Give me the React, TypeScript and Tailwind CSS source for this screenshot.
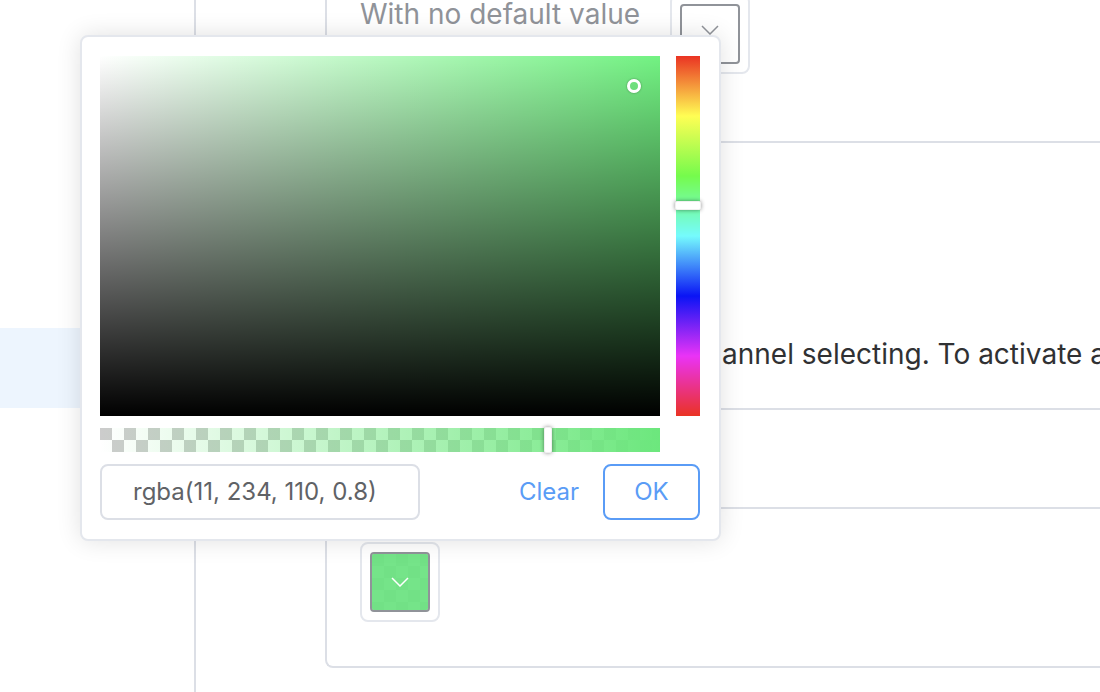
import React from "react";

// colours are written as the screenshot shows them (P3-shifted)
const CHECKER =
  "bg-[repeating-conic-gradient(#fff_0%_25%,#cccccc_0%_50%)] bg-size-[24px_24px]";

function Chevron({ className }: { className: string }) {
  return (
    <svg width="18" height="10" viewBox="0 0 18 10" fill="none" className={className}>
      <path d="M1 1l8 8 8-8" stroke="currentColor" strokeWidth="1.5" />
    </svg>
  );
}

function Trigger({ filled }: { filled?: boolean }) {
  return (
    <div className="h-[80px] w-[80px] shrink-0 rounded-[8px] border-2 border-[#e4e7ed] p-[8px]">
      <div
        className={`h-[60px] w-[60px] overflow-hidden rounded-[4px] border-2 border-[#909399] ${
          filled ? CHECKER : "bg-white"
        }`}
      >
        <div
          className={`flex h-full w-full items-center justify-center ${
            filled ? "bg-[rgba(106,226,128,0.93)]" : ""
          }`}
        >
          <Chevron className={filled ? "text-white" : "-translate-y-[4px] text-[#909399]"} />
        </div>
      </div>
    </div>
  );
}

function ColorDropdown() {
  return (
    <div className="absolute left-[80px] top-[35px] h-[506px] w-[641px] rounded-[8px] border-2 border-[#e4e7ed] bg-white pb-[19px] pl-[18px] pr-[19px] pt-[19px] shadow-[0_0_24px_rgba(0,0,0,0.12)]">
      <div className="flex gap-[16px]">
        {/* saturation / value panel */}
        <div className="h-[360px] w-[560px] bg-[#72f282]">
          <div className="h-full w-full bg-[linear-gradient(to_right,#fff,rgba(255,255,255,0))]">
            <div className="relative h-full w-full bg-[linear-gradient(to_top,#000,rgba(0,0,0,0))]">
              <div className="absolute left-[527px] top-[23px] h-[14px] w-[14px] rounded-full border-[3px] border-white shadow-[0_0_2px_rgba(0,0,0,0.45)]" />
            </div>
          </div>
        </div>
        {/* hue bar */}
        <div className="relative h-[360px] w-[24px] bg-[linear-gradient(to_bottom,#ea3323_0%,#fffe54_16.67%,#75fb4c_33.33%,#75fbfd_50%,#0a14f5_66.67%,#ea33f6_83.33%,#ea3323_100%)]">
          <div className="absolute -left-px top-[145px] h-[9px] w-[26px] rounded-[2px] border border-[#f0f0f0] bg-white shadow-[0_0_4px_rgba(0,0,0,0.45)]" />
        </div>
      </div>

      {/* alpha bar */}
      <div className={`relative mt-[12px] h-[24px] w-[560px] ${CHECKER}`}>
        <div className="h-full w-full bg-[linear-gradient(to_right,rgba(108,231,125,0),#6ce77d)]" />
        <div className="absolute -top-px left-[444px] h-[26px] w-[8px] rounded-[2px] border border-[#f0f0f0] bg-white shadow-[0_0_4px_rgba(0,0,0,0.45)]" />
      </div>

      <div className="mt-[12px] flex h-[56px] items-center justify-between">
        <div className="flex h-[56px] w-[320px] items-center rounded-[8px] border-2 border-[#dcdfe6] pl-[31px] text-[24px] text-[#606266]">
          rgba(11, 234, 110, 0.8)
        </div>
        <div className="flex items-center gap-[24px]">
          <span className="text-[24px] text-[#5a9cf6]">Clear</span>
          <button className="flex h-[56px] w-[97px] items-center justify-center rounded-[8px] border-2 border-[#5a9cf6] text-[24px] text-[#5a9cf6]">
            OK
          </button>
        </div>
      </div>
    </div>
  );
}

export default function App() {
  return (
    <div className="relative h-[692px] w-[1100px] overflow-hidden bg-white font-['Inter',sans-serif]">
      <div className="flex h-full">
        <aside className="h-full w-[196px] shrink-0 border-r-2 border-[#dcdfe6] pt-[328px]">
          <div className="h-[80px] bg-[#edf5fe]" />
        </aside>

        <main className="flex min-w-0 flex-1 flex-col pl-[129px]">
          <section className="-mt-[40px] w-[820px] shrink-0 rounded-bl-[8px] border-2 border-r-0 border-[#dcdfe6] pb-[67px] pl-[33px] pt-[32px]">
            <div className="flex items-start gap-[30px]">
              <span className="text-[28px] leading-[40px] text-[#909399]">With no default value</span>
              <Trigger />
            </div>
          </section>

          <p className="mt-[190px] whitespace-nowrap text-[28px] leading-[42px] text-[#303133]">
            <span className="inline-block w-[397px] tracking-[-0.5px]">ColorPicker supports alpha ch</span>
            annel selecting. To activate alpha selecting, just add the show-alpha attribute.
          </p>

          <section className="mt-[33px] w-[820px] shrink-0 rounded-l-[8px] border-2 border-r-0 border-[#dcdfe6]">
            <div className="h-[97px]" />
            <div className="border-t-2 border-[#dcdfe6] pb-[44px] pl-[33px] pt-[33px]">
              <Trigger filled />
            </div>
          </section>
        </main>
      </div>

      <ColorDropdown />
    </div>
  );
}
